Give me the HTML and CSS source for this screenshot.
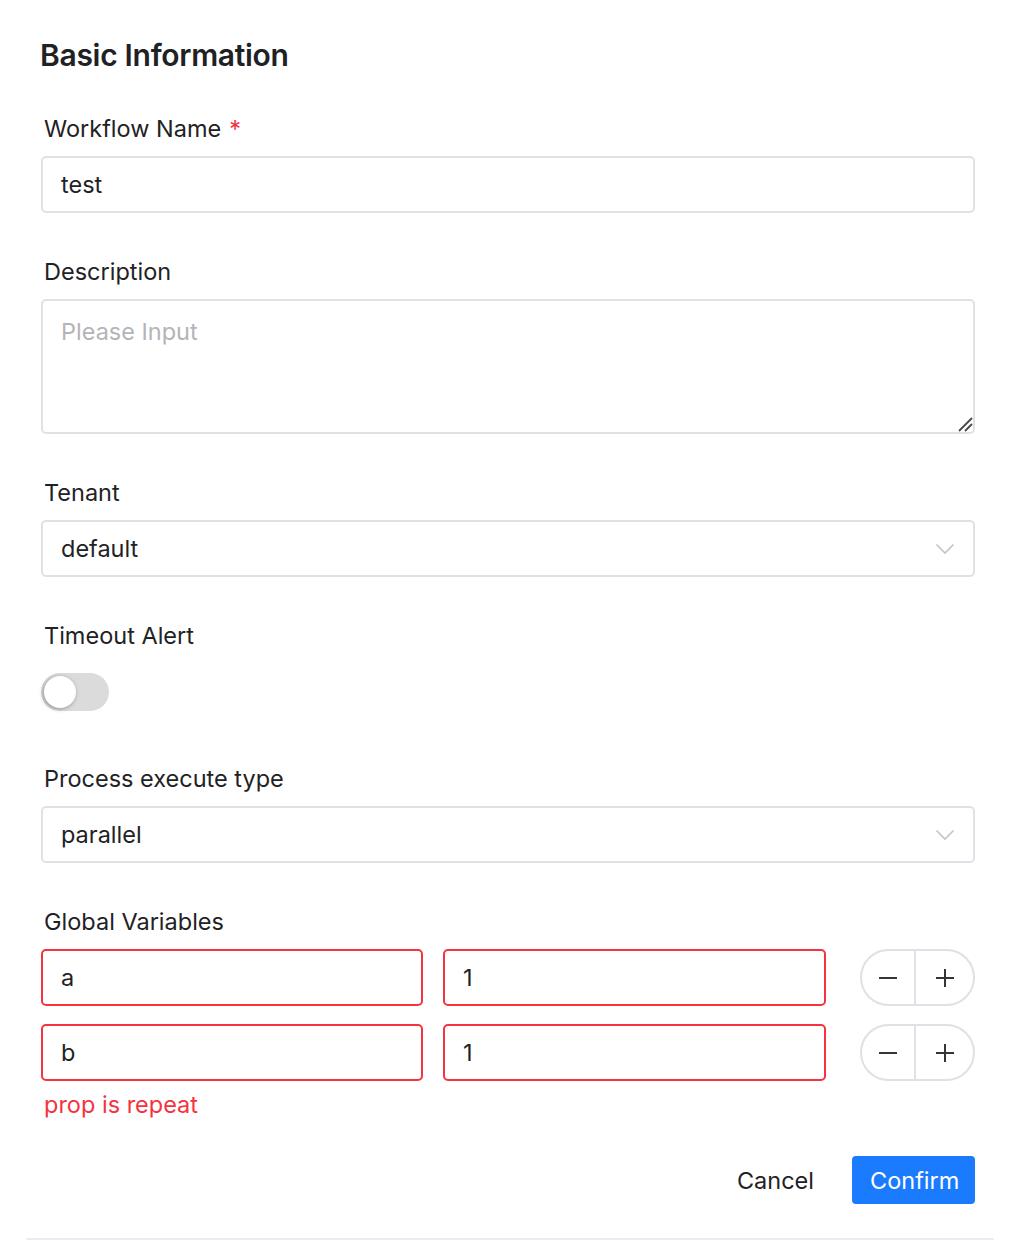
FILE: index.html
```html
<!DOCTYPE html>
<html lang="en">
<head>
<meta charset="utf-8">
<title>Basic Information</title>
<link rel="stylesheet" href="styles.css">
</head>
<body>
<div class="page">
  <h2 class="title">Basic Information</h2>
  <form class="form">
    <div class="item">
      <label class="label">Workflow Name<span class="req">*</span></label>
      <div class="input">test</div>
    </div>
    <div class="item">
      <label class="label">Description</label>
      <div class="ta-wrap">
        <textarea class="textarea" placeholder="Please Input"></textarea>
        <svg class="grip" viewBox="0 0 16 16" width="16" height="16"><path d="M2 15 L15 2 M8 15 L15 8" stroke="#4a4a4a" stroke-width="1.8" fill="none"/></svg>
      </div>
    </div>
    <div class="item">
      <label class="label">Tenant</label>
      <div class="input select">default
        <svg class="chev" viewBox="0 0 20 12" width="20" height="12"><path d="M1.5 1.5 L10 10 L18.5 1.5" fill="none" stroke="#c4c4c8" stroke-width="1.6"/></svg>
      </div>
    </div>
    <div class="item">
      <label class="label">Timeout Alert</label>
      <div class="switch-wrap"><span class="switch"><span class="knob"></span></span></div>
    </div>
    <div class="item">
      <label class="label">Process execute type</label>
      <div class="input select">parallel
        <svg class="chev" viewBox="0 0 20 12" width="20" height="12"><path d="M1.5 1.5 L10 10 L18.5 1.5" fill="none" stroke="#c4c4c8" stroke-width="1.6"/></svg>
      </div>
    </div>
    <div class="item">
      <label class="label">Global Variables</label>
      <div class="vars">
        <div class="var-row">
          <div class="input err">a</div>
          <div class="input err">1</div>
          <div class="btn-group">
            <span class="gbtn minus"><svg viewBox="0 0 20 20" width="20" height="20"><path d="M1 10 H19" stroke="#333639" stroke-width="2"/></svg></span>
            <span class="gbtn"><svg viewBox="0 0 20 20" width="20" height="20"><path d="M1 10 H19 M10 1 V19" stroke="#333639" stroke-width="2"/></svg></span>
          </div>
        </div>
        <div class="var-row">
          <div class="input err">b</div>
          <div class="input err">1</div>
          <div class="btn-group">
            <span class="gbtn minus"><svg viewBox="0 0 20 20" width="20" height="20"><path d="M1 10 H19" stroke="#333639" stroke-width="2"/></svg></span>
            <span class="gbtn"><svg viewBox="0 0 20 20" width="20" height="20"><path d="M1 10 H19 M10 1 V19" stroke="#333639" stroke-width="2"/></svg></span>
          </div>
        </div>
      </div>
      <div class="error">prop is repeat</div>
    </div>
  </form>
  <div class="footer">
    <button class="btn text" type="button">Cancel</button>
    <button class="btn primary" type="button">Confirm</button>
  </div>
  <div class="bottom-line"></div>
</div>
</body>
</html>
```
FILE: styles.css
```css
* { box-sizing: border-box; }
html, body {
  margin: 0;
  background: #ffffff;
}
body {
  font-family: Inter, "Noto Sans", "Liberation Sans", sans-serif;
  color: #1f2225;
}
.page {
  width: 1016px;
  padding-top: 36px;
}
.title {
  margin: 0 0 0 40px;
  font-size: 30px;
  line-height: 38px;
  font-weight: 600;
  color: #1f2225;
  letter-spacing: -0.3px;
}
.form {
  display: flex;
  flex-direction: column;
  gap: 42px;
  padding: 38px 41px 0 41px;
}
.item {
  display: flex;
  flex-direction: column;
}
.label {
  display: block;
  padding-left: 3px;
  font-size: 23.5px;
  line-height: 34px;
  height: 34px;
  margin-bottom: 10px;
  color: #1f2225;
}
.req {
  color: #f5303e;
  margin-left: 8px;
}
.input {
  height: 57px;
  border: 2px solid #e0e0e6;
  border-radius: 5px;
  padding: 0 18px;
  font-size: 23.5px;
  display: flex;
  align-items: center;
  color: #1f2225;
  background: #fff;
}
.ta-wrap {
  position: relative;
}
.textarea {
  display: block;
  width: 100%;
  height: 135px;
  border: 2px solid #e0e0e6;
  border-radius: 5px;
  padding: 14px 18px;
  font-family: inherit;
  font-size: 23.5px;
  line-height: 33px;
  color: #1f2225;
  resize: none;
  outline: none;
}
.textarea::placeholder { color: #b4b4b8; }
.grip {
  position: absolute;
  right: 2px;
  bottom: 2px;
}
.select {
  justify-content: space-between;
}
.switch-wrap {
  height: 57px;
  display: flex;
  align-items: center;
}
.switch {
  position: relative;
  width: 68px;
  height: 38px;
  border-radius: 19px;
  background: #dbdbdb;
  margin-top: 1px;
}
.knob {
  position: absolute;
  left: 3px;
  top: 3px;
  width: 32px;
  height: 32px;
  border-radius: 50%;
  background: #fff;
  box-shadow: -1px 1px 4px rgba(0,0,0,0.35);
}
.vars {
  display: flex;
  flex-direction: column;
  gap: 18px;
}
.var-row {
  display: grid;
  grid-template-columns: 382px 383px 1fr;
  column-gap: 20px;
}
.var-row .btn-group { margin-left: 14px; }
.input.err { border-color: #f5333f; }
.btn-group {
  display: flex;
  height: 57px;
  border: 2px solid #e0e0e6;
  border-radius: 29px;
  overflow: hidden;
}
.gbtn {
  flex: 1;
  display: flex;
  align-items: center;
  justify-content: center;
}
.gbtn.minus {
  flex: 0 0 54px;
  border-right: 2px solid #e0e0e6;
}
.error {
  color: #f5333f;
  font-size: 23.5px;
  line-height: 30px;
  padding-left: 3px;
  margin-top: 9px;
}
.footer {
  display: flex;
  justify-content: flex-end;
  align-items: center;
  gap: 20px;
  padding: 36px 41px 0 0;
}
.btn {
  height: 48px;
  border: none;
  border-radius: 4px;
  font-family: inherit;
  font-size: 23.5px;
  padding: 0 18px;
  background: transparent;
  color: #1f2225;
  cursor: pointer;
}
.btn.primary {
  background: #1a7bff;
  color: #fff;
  width: 123px;
}
.bottom-line {
  margin: 34px 22px 0 26px;
  height: 3px;
  border-radius: 2px;
  background: #ececf0;
}
```
